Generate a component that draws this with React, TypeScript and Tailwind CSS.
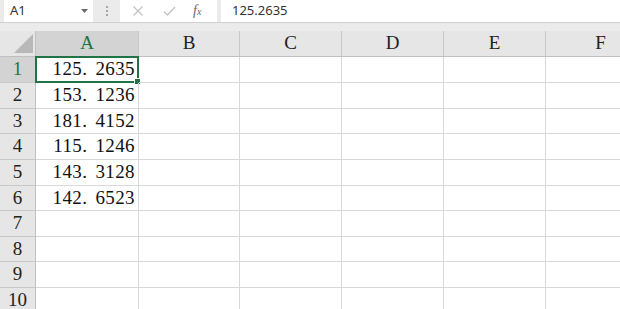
import React from "react";

const cols = [
  { name: "A", w: "w-[103px]" },
  { name: "B", w: "w-[101px]" },
  { name: "C", w: "w-[102px]" },
  { name: "D", w: "w-[102px]" },
  { name: "E", w: "w-[102px]" },
  { name: "F", w: "w-[110px]" },
];

const rows = [
  { n: 1, h: "h-[26px]", v: ["125.", "2635"] },
  { n: 2, h: "h-[26px]", v: ["153.", "1236"] },
  { n: 3, h: "h-[25px]", v: ["181.", "4152"] },
  { n: 4, h: "h-[26px]", v: ["115.", "1246"] },
  { n: 5, h: "h-[26px]", v: ["143.", "3128"] },
  { n: 6, h: "h-[25px]", v: ["142.", "6523"] },
  { n: 7, h: "h-[26px]", v: null },
  { n: 8, h: "h-[25px]", v: null },
  { n: 9, h: "h-[26px]", v: null },
  { n: 10, h: "h-[26px]", v: null },
];

export default function App() {
  return (
    <div className="w-[620px] h-[309px] overflow-hidden bg-white relative">
      {/* top bar */}
      <div className="flex h-[22px] bg-[#ebebeb] font-sans text-[13px] text-[#333]">
        <div className="ml-[4px] w-[89px] bg-white flex items-center justify-between pl-[6px] pr-[5px]">
          <span>A1</span>
          <svg width="7" height="4" viewBox="0 0 7 4">
            <path d="M0 0 L7 0 L3.5 4 Z" fill="#6b6b6b" />
          </svg>
        </div>
        <div className="w-[27px] flex flex-col items-center justify-center gap-[2px]">
          <div className="w-[2px] h-[2px] bg-[#a6a6a6]" />
          <div className="w-[2px] h-[2px] bg-[#a6a6a6]" />
          <div className="w-[2px] h-[2px] bg-[#a6a6a6]" />
        </div>
        <div className="w-[97px] bg-white flex items-center">
          <svg width="12" height="12" viewBox="0 0 12 12" className="ml-[12px]">
            <path d="M1.5 1.5 L10.5 10.5 M10.5 1.5 L1.5 10.5" stroke="#c4c4c4" strokeWidth="1.3" />
          </svg>
          <svg width="13" height="12" viewBox="0 0 13 12" className="ml-[19px]">
            <path d="M1 6.5 L4.5 10 L12 2" stroke="#c4c4c4" strokeWidth="1.4" fill="none" />
          </svg>
          <span className="ml-[17px] italic text-[#666] font-['Liberation_Serif'] text-[14px] leading-none">
            f<span className="text-[10px]">x</span>
          </span>
        </div>
        <div className="ml-[4px] flex-1 bg-white flex items-center pl-[11px]">125.2635</div>
      </div>

      {/* column header */}
      <div className="flex h-[35px] bg-[#ebebeb] border-t border-[#d0d0d0] border-b border-b-[#c0c0c0] items-end font-['Liberation_Serif'] text-[19px] text-[#222]">
        <div className="w-[36px] h-[25px] shrink-0 relative border-r border-[#c0c0c0] bg-[#e6e6e6]">
          <div className="absolute right-[2px] bottom-[3px] w-[19px] h-[19px] bg-[#b8b8b8] [clip-path:polygon(100%_0,100%_100%,0_100%)]" />
        </div>
        {cols.map((c, i) => (
          <div
            key={c.name}
            className={`${c.w} h-[25px] shrink-0 flex items-center justify-center border-r border-[#c8c8c8] ${
              i === 0 ? "bg-[#d3d3d3] text-[#217346]" : "bg-[#e6e6e6]"
            }`}
          >
            {c.name}
          </div>
        ))}
      </div>

      {/* rows */}
      {rows.map((r) => (
        <div key={r.n} className={`flex ${r.h}`}>
          <div
            className={`w-[36px] shrink-0 flex items-center justify-center border-r border-b border-r-[#c0c0c0] border-b-[#c8c8c8] font-['Liberation_Serif'] text-[19px] ${
              r.n === 1 ? "bg-[#d3d3d3] text-[#217346]" : "bg-[#e6e6e6] text-[#222]"
            }`}
          >
            {r.n}
          </div>
          {cols.map((c, i) => (
            <div
              key={c.name}
              className={`${c.w} shrink-0 relative border-r border-b border-[#d8d8d8] flex items-center justify-end pr-[3px] font-['Liberation_Serif'] text-[19px] text-[#111] tracking-[0.4px]`}
            >
              {i === 0 && r.v ? (
                <span>
                  {r.v[0]}
                  <span className="inline-block w-[8px]" />
                  {r.v[1]}
                </span>
              ) : null}
              {i === 0 && r.n === 1 ? (
                <>
                  <div className="absolute -left-[1px] -top-[1px] -right-[1px] -bottom-[1px] border-2 border-[#217346]" />
                  <div className="absolute -right-[3px] -bottom-[3px] w-[5px] h-[5px] bg-[#217346] border border-white box-content" />
                </>
              ) : null}
            </div>
          ))}
        </div>
      ))}
    </div>
  );
}
